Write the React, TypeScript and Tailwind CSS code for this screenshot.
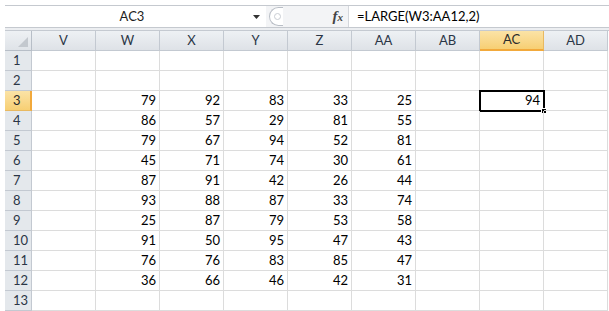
import React from 'react';

const columns = ['V', 'W', 'X', 'Y', 'Z', 'AA', 'AB', 'AC', 'AD'];

// values for W..AA, rows 3..12
const data: Record<number, number[]> = {
  3: [79, 92, 83, 33, 25],
  4: [86, 57, 29, 81, 55],
  5: [79, 67, 94, 52, 81],
  6: [45, 71, 74, 30, 61],
  7: [87, 91, 42, 26, 44],
  8: [93, 88, 87, 33, 74],
  9: [25, 87, 79, 53, 58],
  10: [91, 50, 95, 47, 43],
  11: [76, 76, 83, 85, 47],
  12: [36, 66, 46, 42, 31],
};

const rows = Array.from({ length: 13 }, (_, i) => i + 1);

function cellValue(row: number, col: number): string {
  if (col === 7 && row === 3) return '94';
  const vals = data[row];
  if (!vals) return '';
  if (col >= 1 && col <= 5) return String(vals[col - 1]);
  return '';
}

export default function App() {
  return (
    <div
      className="w-[609px] h-[311px] overflow-hidden bg-white pt-[5px] pl-[5px] text-[#1e1e1e]"
      style={{ fontFamily: 'Lato, "Open Sans", sans-serif' }}
    >
      {/* Formula bar */}
      <div className="flex h-[23px] border-t border-b border-[#c5c9cf] bg-white">
        <div className="flex w-[261px] items-center">
          <div className="flex-1 pl-[6px] text-center text-[13px]">AC3</div>
          <svg width="7" height="4" viewBox="0 0 7 4" className="mr-[6px]">
            <path d="M0 0h7L3.5 4z" fill="#333" />
          </svg>
        </div>
        <div className="flex w-[82px] items-center bg-[#f3f4f6]">
          <div className="relative ml-[3px] h-[19px] w-[14px] rounded-l-full border border-r-0 border-[#b9bec6] bg-white">
            <div className="absolute left-[4px] top-[5px] h-[7px] w-[7px] rounded-full border border-[#c9cdd3]" />
          </div>
          <div className="flex-1" />
          <span
            className="mr-[5px] text-[15px] font-bold italic text-[#444]"
            style={{ fontFamily: '"Liberation Serif", serif' }}
          >
            f<span className="text-[11px]">x</span>
          </span>
        </div>
        <div className="flex flex-1 items-center border-l border-[#d4d7dc] pl-[8px] text-[13px] text-black">
          =LARGE(W3:AA12,2)
        </div>
      </div>
      <div className="h-[3px] bg-[#eceef1] border-b border-[#c5cad1]" />

      {/* Sheet */}
      <div className="grid grid-cols-[27px_repeat(9,64px)] grid-rows-[20px_repeat(13,20px)]">
        <div className="relative border-r border-b border-[#b7bec7] bg-gradient-to-b from-[#eef1f4] to-[#dfe3e8]">
          <svg width="10" height="10" viewBox="0 0 10 10" className="absolute right-[3px] bottom-[3px]">
            <path d="M10 0V10H0z" fill="#c3c8ce" />
          </svg>
        </div>
        {columns.map((c) => (
          <div
            key={c}
            className={
              c === 'AC'
                ? 'flex items-center justify-center border-r border-b-2 border-r-[#e8b961] border-b-[#f2a93b] bg-gradient-to-b from-[#fbe3a6] to-[#f7cf73] text-[13px] text-[#2b2b2b]'
                : 'flex items-center justify-center border-r border-b border-[#c3c9d1] bg-gradient-to-b from-[#eef1f4] to-[#dee2e7] text-[13px] text-[#2b3646]'
            }
          >
            {c}
          </div>
        ))}
        {rows.map((r) => (
          <React.Fragment key={r}>
            <div
              className={
                r === 3
                  ? 'flex items-center pl-[8px] border-r-2 border-b border-r-[#f2a93b] border-b-[#e8b961] bg-gradient-to-b from-[#fbe3a6] to-[#f7cf73] text-[13px] text-[#2b2b2b]'
                  : 'flex items-center pl-[8px] border-r border-b border-[#c3c9d1] bg-[#e4e8ec] text-[13px] text-[#2b3646]'
              }
            >
              {r}
            </div>
            {columns.map((c, ci) => (
              <div
                key={c}
                className="relative flex items-center justify-end border-r border-b border-[#dcdcdc] pr-[3px] text-[13px] text-black"
              >
                {cellValue(r, ci)}
                {r === 3 && c === 'AC' && (
                  <>
                    <div className="absolute -left-[1px] -top-[1px] h-[22px] w-[66px] border-2 border-black" />
                    <div className="absolute -right-[4px] -bottom-[4px] h-[6px] w-[6px] border border-white bg-black" />
                  </>
                )}
              </div>
            ))}
          </React.Fragment>
        ))}
      </div>
    </div>
  );
}
